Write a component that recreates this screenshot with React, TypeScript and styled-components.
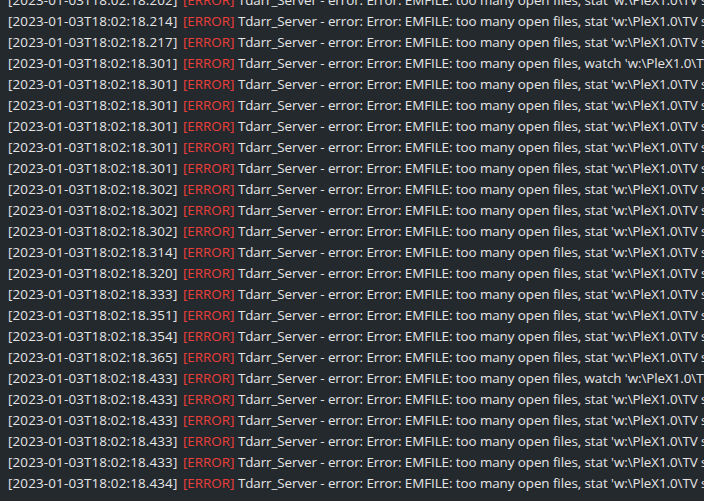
import React from 'react';
import styled, {createGlobalStyle} from 'styled-components';

const GlobalStyle = createGlobalStyle`
  html, body {
    margin: 0;
    padding: 0;
    background: #24292e;
  }
`;

const Console = styled.div`
  width: 704px;
  height: 501px;
  overflow: hidden;
  background: #24292e;
  color: #e6e6e6;
  font-family: "Open Sans", "Noto Sans", sans-serif;
  font-size: 13.4px;
`;

const Lines = styled.ul`
  list-style-type: none;
  margin: -10px 0 0;
  padding: 0 0 0 8px;
`;

const Line = styled.li`
  height: 21px;
  line-height: 21px;
  white-space: nowrap;
`;

const Stamp = styled.span`
  letter-spacing: 0.16px;
  margin-right: 2px;
`;

const Level = styled.span`
  color: #ec3f3a;
`;

const Message = styled.span`
  letter-spacing: -0.07px;
`;

const entries: Array<[string, string]> = [
  ['202', 'stat'],
  ['214', 'stat'],
  ['217', 'stat'],
  ['301', 'watch'],
  ['301', 'stat'],
  ['301', 'stat'],
  ['301', 'stat'],
  ['301', 'stat'],
  ['301', 'stat'],
  ['302', 'stat'],
  ['302', 'stat'],
  ['302', 'stat'],
  ['314', 'stat'],
  ['320', 'stat'],
  ['333', 'stat'],
  ['351', 'stat'],
  ['354', 'stat'],
  ['365', 'stat'],
  ['433', 'watch'],
  ['433', 'stat'],
  ['433', 'stat'],
  ['433', 'stat'],
  ['433', 'stat'],
  ['434', 'stat'],
];

const App = () => {
  return (
    <>
      <GlobalStyle />
      <Console>
        <Lines>
          {entries.map(([ms, op], i) => (
            <Line key={i}>
              <Stamp>[2023-01-03T18:02:18.{ms}]</Stamp>{' '}
              <Level>[ERROR]</Level>{' '}
              <Message>
                Tdarr_Server - error: Error: EMFILE: too many open files, {op} 'w:\PleX1.0\TV shows\'
              </Message>
            </Line>
          ))}
        </Lines>
      </Console>
    </>
  );
};

export default App;
